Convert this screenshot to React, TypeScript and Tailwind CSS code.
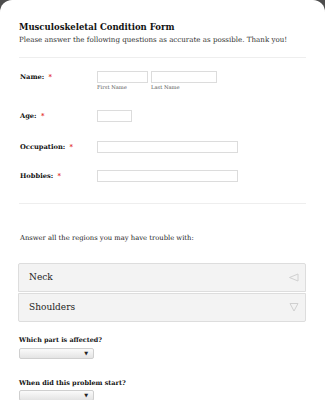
import React from "react";

const font = { fontFamily: '"DejaVu Serif", "Liberation Serif", serif' };

function Label({ children }: { children: React.ReactNode }) {
  return (
    <div className="w-[77px] shrink-0 text-[6.7px] font-bold text-[#111]">
      {children} <span className="ml-[2px] text-[#e3342f]">*</span>
    </div>
  );
}

function Box({ w }: { w: string }) {
  return <div className={`h-[12px] border border-[#dcdcdc] bg-white ${w}`} />;
}

function Select() {
  return (
    <div className="flex h-[11px] w-[75px] items-center justify-end rounded-[2px] border border-[#cfcfcf] bg-gradient-to-b from-[#fafafa] to-[#e4e4e4] pr-[5px]">
      <span className="text-[5px] leading-none text-[#222]">▼</span>
    </div>
  );
}

export default function App() {
  return (
    <div className="h-[400px] w-[325px] overflow-hidden bg-[#4d4d4d]" style={font}>
      <div className="h-full rounded-t-[12px] bg-white px-[19px] pt-[21px]">
        <h1 className="text-[8.5px] font-bold leading-[12px] text-[#111]">Musculoskeletal Condition Form</h1>
        <p className="mt-[2px] text-[7.1px] leading-[10px] text-[#333]">
          Please answer the following questions as accurate as possible. Thank you!
        </p>
        <div className="mt-[12px] border-t border-[#eeeeee]" />

        <div className="mt-[13px] flex pl-[1px]">
          <div className="pt-[1px]"><Label>Name:</Label></div>
          <div className="flex gap-[3px]">
            <div>
              <Box w="w-[51px]" />
              <div className="mt-[1px] text-[5.2px] text-[#555]">First Name</div>
            </div>
            <div>
              <Box w="w-[66px]" />
              <div className="mt-[1px] text-[5.2px] text-[#555]">Last Name</div>
            </div>
          </div>
        </div>

        <div className="mt-[18px] flex pl-[1px]">
          <div className="pt-[1px]"><Label>Age:</Label></div>
          <Box w="w-[35px]" />
        </div>

        <div className="mt-[19px] flex pl-[1px]">
          <div className="pt-[1px]"><Label>Occupation:</Label></div>
          <Box w="w-[141px]" />
        </div>

        <div className="mt-[17px] flex pl-[1px]">
          <div className="pt-[1px]"><Label>Hobbies:</Label></div>
          <Box w="w-[141px]" />
        </div>

        <div className="mt-[21px] border-t border-[#eeeeee]" />

        <p className="mt-[29px] pl-[1px] text-[6.8px] text-[#222]">Answer all the regions you may have trouble with:</p>

        <div className="mt-[20px] ml-[-1px]">
          <div className="flex h-[29px] items-center justify-between rounded-t-[2px] border border-[#dddddd] bg-[#f3f3f3] pl-[10px] pr-[6px]">
            <span className="text-[9px] text-[#222]">Neck</span>
            <svg width="11" height="9" viewBox="0 0 11 9">
              <path d="M10 1 L1.5 4.5 L10 8 Z" fill="none" stroke="#d0d0d0" strokeWidth="1" />
            </svg>
          </div>
          <div className="mt-[1px] flex h-[29px] items-center justify-between rounded-b-[2px] border border-[#dddddd] bg-[#f3f3f3] pl-[10px] pr-[6px]">
            <span className="text-[9px] text-[#222]">Shoulders</span>
            <svg width="10" height="10" viewBox="0 0 10 10">
              <path d="M1 1.5 L9 1.5 L5 9 Z" fill="none" stroke="#d0d0d0" strokeWidth="1" />
            </svg>
          </div>
        </div>

        <div className="mt-[14px] text-[6.4px] font-bold text-[#111]">Which part is affected?</div>
        <div className="mt-[2px]"><Select /></div>

        <div className="mt-[20px] text-[6.5px] font-bold text-[#111]">When did this problem start?</div>
        <div className="mt-[2px]"><Select /></div>
      </div>
    </div>
  );
}
